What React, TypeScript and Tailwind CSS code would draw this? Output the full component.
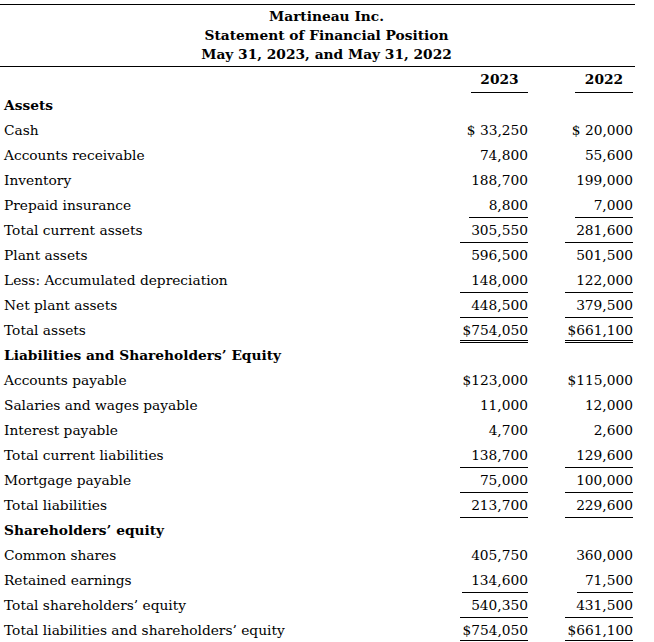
type Row = {
  label: string;
  bold?: boolean;
  a?: string;
  b?: string;
  // underline styles for each column: 's' single, 'd' double
  ua?: 's' | 'd';
  ub?: 's' | 'd';
  wa?: string;
  wb?: string;
};

const rows: Row[] = [
  { label: 'Assets', bold: true },
  { label: 'Cash', a: '$ 33,250', b: '$ 20,000' },
  { label: 'Accounts receivable', a: '74,800', b: '55,600' },
  { label: 'Inventory', a: '188,700', b: '199,000' },
  { label: 'Prepaid insurance', a: '8,800', b: '7,000', ua: 's', ub: 's', wa: 'w-[59px]', wb: 'w-[58px]' },
  { label: 'Total current assets', a: '305,550', b: '281,600', ua: 's', ub: 's' },
  { label: 'Plant assets', a: '596,500', b: '501,500' },
  { label: 'Less: Accumulated depreciation', a: '148,000', b: '122,000', ua: 's', ub: 's' },
  { label: 'Net plant assets', a: '448,500', b: '379,500', ua: 's', ub: 's' },
  { label: 'Total assets', a: '$754,050', b: '$661,100', ua: 'd', ub: 'd' },
  { label: 'Liabilities and Shareholders\u2019 Equity', bold: true },
  { label: 'Accounts payable', a: '$123,000', b: '$115,000' },
  { label: 'Salaries and wages payable', a: '11,000', b: '12,000' },
  { label: 'Interest payable', a: '4,700', b: '2,600' },
  { label: 'Total current liabilities', a: '138,700', b: '129,600', ua: 's', ub: 's' },
  { label: 'Mortgage payable', a: '75,000', b: '100,000', ua: 's', ub: 's' },
  { label: 'Total liabilities', a: '213,700', b: '229,600', ua: 's', ub: 's' },
  { label: 'Shareholders\u2019 equity', bold: true },
  { label: 'Common shares', a: '405,750', b: '360,000' },
  { label: 'Retained earnings', a: '134,600', b: '71,500', ua: 's', ub: 's', wa: 'w-[66px]', wb: 'w-[56px]' },
  { label: 'Total shareholders\u2019 equity', a: '540,350', b: '431,500', ua: 's', ub: 's' },
  { label: 'Total liabilities and shareholders\u2019 equity', a: '$754,050', b: '$661,100', ua: 'd', ub: 'd' },
];

function Amount({ value, u, w }: { value?: string; u?: 's' | 'd'; w?: string }) {
  if (!value) return null;
  const line = u === 's' ? 'border-b border-black' : u === 'd' ? 'border-b-[3px] border-double border-black' : '';
  return (
    <span className={`inline-block h-full text-right leading-[25px] ${w ?? 'w-[68px]'} ${line}`}>
      {value}
    </span>
  );
}

export default function App() {
  return (
    <div className="min-h-screen bg-white text-black" style={{ fontFamily: '"DejaVu Serif", Georgia, serif' }}>
      <div className="w-[635px] pt-[4px] text-[13.75px]">
        {/* Title */}
        <div className="border-t-[1.5px] border-b-[1.5px] border-black py-[2px] text-center font-bold leading-[19px] pl-[18px]">
          <div>Martineau Inc.</div>
          <div>Statement of Financial Position</div>
          <div>May 31, 2023, and May 31, 2022</div>
        </div>

        {/* Year header */}
        <div className="flex h-[26px] items-end font-bold">
          <div className="flex-1" />
          <div className="w-[90px] flex justify-end">
            <span className="w-[57px] border-b border-black pb-[2px] text-center">2023</span>
          </div>
          <div className="w-[107px] flex justify-end pr-[2px]">
            <span className="w-[58px] border-b border-black pb-[2px] text-center">2022</span>
          </div>
        </div>

        {/* Body */}
        {rows.map((r) => (
          <div key={r.label} className="flex h-[25px] items-stretch">
            <div className={`flex-1 pl-[4px] leading-[25px] ${r.bold ? 'font-bold' : ''}`}>{r.label}</div>
            <div className="w-[90px] flex justify-end">
              <Amount value={r.a} u={r.ua} w={r.wa} />
            </div>
            <div className="w-[107px] flex justify-end pr-[2px]">
              <Amount value={r.b} u={r.ub} w={r.wb} />
            </div>
          </div>
        ))}
      </div>
    </div>
  );
}
